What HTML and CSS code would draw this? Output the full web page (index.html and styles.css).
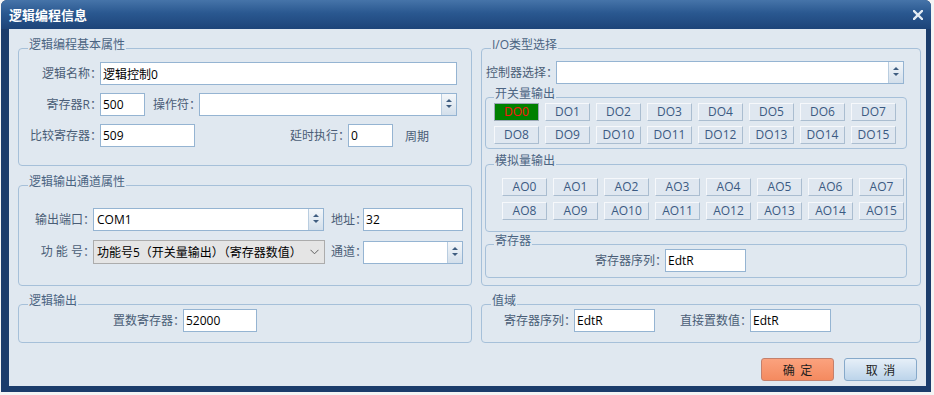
FILE: index.html
```html
<!DOCTYPE html>
<html lang="zh-CN">
<head>
  <meta charset="UTF-8">
  <title>逻辑编程信息</title>
  <link rel="stylesheet" href="styles.css">
</head>
<body>
  <div class="window">
    <div class="titlebar">
      <span class="title">逻辑编程信息</span>
      <svg class="close" width="10" height="10" viewBox="0 0 10 10">
        <path d="M1 1 L9 9 M9 1 L1 9" stroke="#e4ecf4" stroke-width="2.4" stroke-linecap="square"/>
      </svg>
    </div>

    <div class="frame-body">
      <div class="content">

        <!-- left column -->
        <div class="col">
          <div class="group g-basic">
            <span class="caption">逻辑编程基本属性</span>
            <div class="row">
              <label class="lbl w83">逻辑名称：</label>
              <input class="field w357" type="text" value="逻辑控制0">
            </div>
            <div class="row">
              <label class="lbl w83">寄存器R：</label>
              <input class="field w45" type="text" value="500">
              <label class="lbl ml8">操作符：</label>
              <div class="spin w258"><span class="spin-btn"></span></div>
            </div>
            <div class="row">
              <label class="lbl w83">比较寄存器：</label>
              <input class="field w95" type="text" value="509">
              <label class="lbl ml95">延时执行：</label>
              <input class="field w45" type="text" value="0">
              <span class="unit">周期</span>
            </div>
          </div>

          <div class="group g-channel">
            <span class="caption">逻辑输出通道属性</span>
            <div class="row">
              <label class="lbl w76">输出端口：</label>
              <div class="spin w231"><span class="spin-val">COM1</span><span class="spin-btn"></span></div>
              <label class="lbl tight ml7">地址：</label>
              <input class="field w100" type="text" value="32">
            </div>
            <div class="row tall">
              <label class="lbl w76">功 能 号：</label>
              <div class="combo w232">
                <span>功能号5（开关量输出）（寄存器数值）</span>
                <svg width="9" height="6" viewBox="0 0 9 6"><path d="M0.5 0.8 L4.5 4.8 L8.5 0.8" fill="none" stroke="#606060" stroke-width="1"/></svg>
              </div>
              <label class="lbl tight ml6">通道：</label>
              <div class="spin w100"><span class="spin-btn"></span></div>
            </div>
          </div>
        </div>

        <!-- right column -->
        <div class="col">
          <div class="group g-io">
            <span class="caption">I/O类型选择</span>
            <div class="row">
              <label class="lbl w76">控制器选择：</label>
              <div class="spin w348"><span class="spin-btn"></span></div>
            </div>

            <div class="group sub g-do">
              <span class="caption">开关量输出</span>
              <div class="btn-grid">
                <span class="io-btn on">DO0</span>
                <span class="io-btn">DO1</span>
                <span class="io-btn">DO2</span>
                <span class="io-btn">DO3</span>
                <span class="io-btn">DO4</span>
                <span class="io-btn">DO5</span>
                <span class="io-btn">DO6</span>
                <span class="io-btn">DO7</span>
                <span class="io-btn">DO8</span>
                <span class="io-btn">DO9</span>
                <span class="io-btn">DO10</span>
                <span class="io-btn">DO11</span>
                <span class="io-btn">DO12</span>
                <span class="io-btn">DO13</span>
                <span class="io-btn">DO14</span>
                <span class="io-btn">DO15</span>
              </div>
            </div>

            <div class="group sub g-ao">
              <span class="caption">模拟量输出</span>
              <div class="btn-grid">
                <span class="io-btn">AO0</span>
                <span class="io-btn">AO1</span>
                <span class="io-btn">AO2</span>
                <span class="io-btn">AO3</span>
                <span class="io-btn">AO4</span>
                <span class="io-btn">AO5</span>
                <span class="io-btn">AO6</span>
                <span class="io-btn">AO7</span>
                <span class="io-btn">AO8</span>
                <span class="io-btn">AO9</span>
                <span class="io-btn">AO10</span>
                <span class="io-btn">AO11</span>
                <span class="io-btn">AO12</span>
                <span class="io-btn">AO13</span>
                <span class="io-btn">AO14</span>
                <span class="io-btn">AO15</span>
              </div>
            </div>

            <div class="group sub g-reg">
              <span class="caption">寄存器</span>
              <div class="row">
                <label class="lbl w181">寄存器序列：</label>
                <input class="field w81" type="text" value="EdtR">
              </div>
            </div>
          </div>
        </div>

        <!-- second row -->
        <div class="group g-out">
          <span class="caption">逻辑输出</span>
          <div class="row">
            <label class="lbl w166">置数寄存器：</label>
            <input class="field w74" type="text" value="52000">
          </div>
        </div>

        <div class="group g-range">
          <span class="caption">值域</span>
          <div class="row">
            <label class="lbl w94">寄存器序列：</label>
            <input class="field w81" type="text" value="EdtR">
            <label class="lbl ml25">直接置数值：</label>
            <input class="field w81" type="text" value="EdtR">
          </div>
        </div>

        <div class="footer">
          <button class="btn ok" type="button">确&nbsp;&nbsp;定</button>
          <button class="btn cancel" type="button">取&nbsp;&nbsp;消</button>
        </div>

      </div>
    </div>
  </div>
</body>
</html>
```

FILE: styles.css
```css
* {
  box-sizing: border-box;
}

body {
  margin: 0;
  background-color: #f4f4f4;
  font-family: "Open Sans", "Noto Sans CJK SC", sans-serif;
  font-size: 12px;
  color: #4a5d76;
}

/* Window frame */
.window {
  width: 930px;
  height: 392px;
  margin-left: 1px;
  background-color: #1b3c6b;
  border-radius: 6px 6px 0 0;
  display: flex;
  flex-direction: column;
}

.titlebar {
  height: 29px;
  flex: none;
  display: flex;
  align-items: center;
  justify-content: space-between;
  padding: 0 8px;
  border-radius: 6px 6px 0 0;
  background: linear-gradient(#4674a9, #2a5890 45%, #1d4479);
  color: white;
  font-family: "Noto Sans CJK SC", sans-serif;
  font-size: 13px;
  font-weight: bold;
}

.close {
  margin-top: 1px;
}

.frame-body {
  flex: 1;
  padding: 0 5px 6px 8px;
  display: flex;
}

/* Client area */
.content {
  flex: 1;
  background-color: #e0e8f0;
  padding: 19px 5px 0 9px;
  display: grid;
  grid-template-columns: 454px 440px;
  column-gap: 9px;
  align-content: start;
}

.col {
  display: flex;
  flex-direction: column;
}

/* Group boxes */
.group {
  position: relative;
  border: 1px solid #a6c0d9;
  border-radius: 4px;
}

.caption {
  position: absolute;
  top: -11px;
  left: 9px;
  padding: 0 1px;
  line-height: 14px;
  background-color: #e0e8f0;
  color: #4b6482;
}

.sub .caption {
  left: 8px;
}

.g-basic {
  padding: 13px 0 18px 0;
  display: flex;
  flex-direction: column;
  gap: 8px;
}

.g-channel {
  margin-top: 19px;
  padding: 22px 0 21px 0;
  display: flex;
  flex-direction: column;
  gap: 9px;
}

.g-io {
  padding: 12px 0 7px 0;
}

.sub {
  margin-left: 3px;
  width: 422px;
}

.g-do {
  margin-top: 13px;
  padding: 5px 0 4px 8px;
}

.g-ao {
  margin-top: 15px;
  padding: 13px 0 11px 16px;
}

.g-reg {
  margin-top: 12px;
  padding: 4px 0 5px 0;
}

.g-out,
.g-range {
  margin-top: 18px;
  padding: 4px 0 10px 0;
}

/* Rows, labels and fields */
.row {
  display: flex;
  align-items: center;
  height: 23px;
}

.row.tall {
  height: 24px;
}

.lbl {
  flex: none;
  text-align: right;
  white-space: nowrap;
  margin-right: -2px;
  line-height: 16px;
}

.lbl.tight {
  margin-right: -4px;
}

.w76 { width: 76px; }
.w83 { width: 83px; }
.w94 { width: 94px; }
.w166 { width: 166px; }
.w181 { width: 181px; }

.ml6 { margin-left: 6px; }
.ml7 { margin-left: 7px; }
.ml8 { margin-left: 8px; }
.ml25 { margin-left: 25px; }
.ml95 { margin-left: 95px; }

.field {
  flex: none;
  height: 23px;
  margin: 0;
  border: 1px solid #95b4d2;
  background-color: white;
  padding: 0 2px;
  font-family: "Open Sans", "Noto Sans CJK SC", sans-serif;
  font-size: 12px;
  color: black;
  outline: none;
}

.field.w45 { width: 45px; }
.field.w74 { width: 74px; }
.field.w81 { width: 81px; }
.field.w95 { width: 95px; }
.field.w100 { width: 100px; }
.field.w357 { width: 357px; }

.unit {
  margin-left: 12px;
}

/* Spin selectors */
.spin {
  flex: none;
  height: 23px;
  display: flex;
  border: 1px solid #95b4d2;
  background-color: white;
  color: black;
}

.spin.w100 { width: 100px; }
.spin.w231 { width: 231px; }
.spin.w258 { width: 258px; }
.spin.w348 { width: 348px; }

.spin-val {
  padding-left: 3px;
  line-height: 21px;
}

.spin-btn {
  position: relative;
  width: 15px;
  margin-left: auto;
  border-left: 1px solid #b9cde0;
  background: linear-gradient(#f4f7fa, #d3dfeb);
}

.spin-btn::before,
.spin-btn::after {
  content: "";
  position: absolute;
  left: 4px;
  border-left: 3px solid transparent;
  border-right: 3px solid transparent;
}

.spin-btn::before {
  top: 5px;
  border-bottom: 3px solid #3f5d80;
}

.spin-btn::after {
  top: 11px;
  border-top: 3px solid #3f5d80;
}

/* Dropdown combo */
.combo {
  flex: none;
  width: 232px;
  height: 24px;
  display: flex;
  align-items: center;
  justify-content: space-between;
  padding: 0 5px 0 3px;
  border: 1px solid #acacac;
  background-color: #e5e5e5;
  color: black;
  white-space: nowrap;
}

/* IO buttons */
.btn-grid {
  display: grid;
  grid-template-columns: repeat(8, 45px);
  column-gap: 6px;
  row-gap: 5px;
}

.g-ao .btn-grid {
  row-gap: 6px;
}

.io-btn {
  height: 18px;
  border: 1px solid;
  border-color: #f6f8fb #aabdd0 #aabdd0 #f6f8fb;
  background-color: #dfe7f0;
  color: #3b5a82;
  font-size: 12px;
  line-height: 16px;
  text-align: center;
}

.io-btn.on {
  background-color: #008000;
  border-color: #9ba9b6;
  color: #ff1010;
}

/* Dialog buttons */
.footer {
  grid-column: 1 / 3;
  margin-top: 15px;
  padding-right: 4px;
  display: flex;
  justify-content: flex-end;
  gap: 10px;
}

.btn {
  width: 73px;
  height: 23px;
  padding: 0;
  border-radius: 3px;
  font-family: "Noto Sans CJK SC", sans-serif;
  font-size: 12px;
  color: #1e1e1e;
  cursor: pointer;
}

.btn.ok {
  border: 1px solid #c4806c;
  background: linear-gradient(#fba27e, #f48a5f);
}

.btn.cancel {
  border: 1px solid #86a9ca;
  background: linear-gradient(#e6eff8, #bcd4ea);
}
```
